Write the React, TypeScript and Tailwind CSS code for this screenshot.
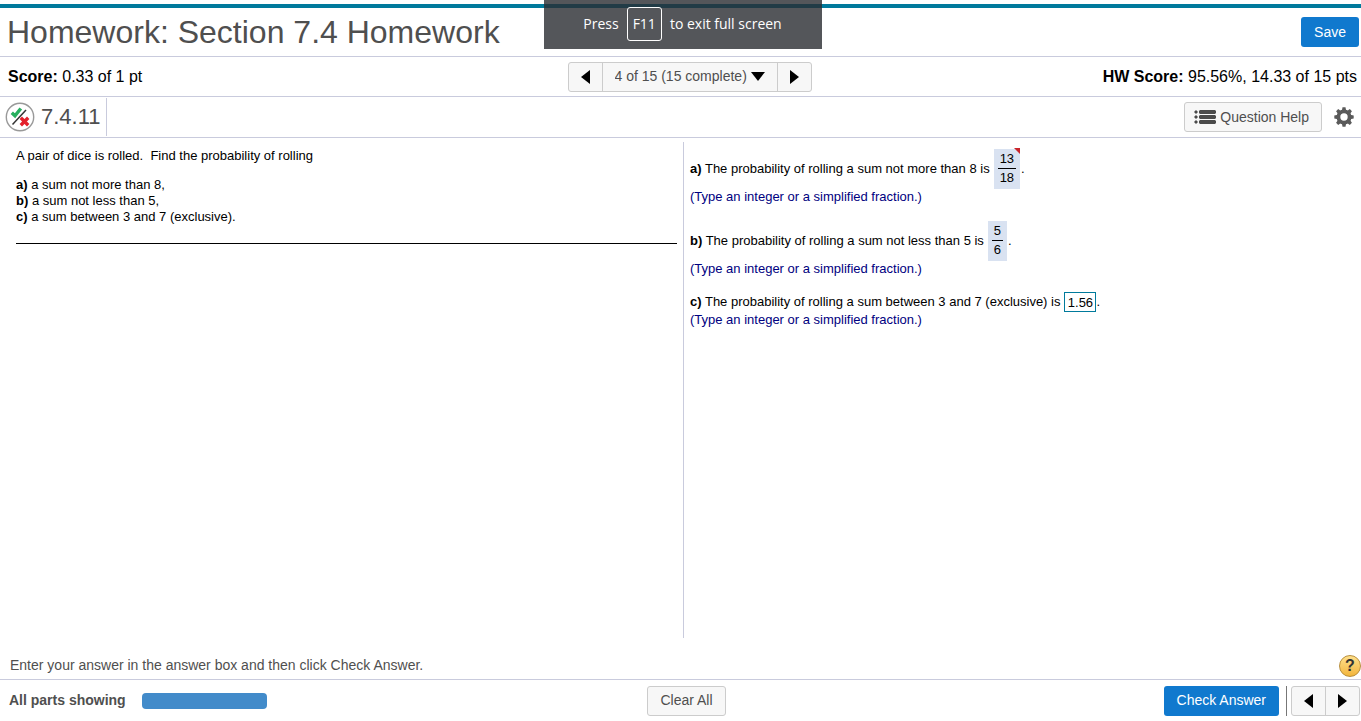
import { useState } from "react";
import type { ReactNode } from "react";

const QUESTION_COUNT = 15;

function LeftArrow() {
  return (
    <svg width="9" height="14" viewBox="0 0 9 14" aria-hidden="true">
      <path d="M9 0v14L0 7z" fill="#000" />
    </svg>
  );
}

function RightArrow() {
  return (
    <svg width="9" height="14" viewBox="0 0 9 14" aria-hidden="true">
      <path d="M0 0v14l9-7z" fill="#000" />
    </svg>
  );
}

function PartialIcon() {
  return (
    <svg width="30" height="30" viewBox="0 0 30 30" aria-hidden="true">
      <circle cx="15" cy="15" r="13.7" fill="#fff" stroke="#999" strokeWidth="1.4" />
      <path d="M7.5 22.5L21 8" stroke="#333" strokeWidth="1.5" />
      <path d="M6.8 10.8l3.2 3 5.8-7.3" fill="none" stroke="#27b05f" strokeWidth="3.4" />
      <path d="M15.8 15.8l7.4 7.4M23.2 15.8l-7.4 7.4" stroke="#e3202b" strokeWidth="3.4" />
    </svg>
  );
}

function ListIcon() {
  return (
    <svg width="22" height="14" viewBox="0 0 22 14" fill="#4a4a4a" aria-hidden="true">
      <path d="M6 0h15l1 1v2l-1 1H6L5 3V1zM6 5h15l1 1v2l-1 1H6L5 8V6zM6 10h15l1 1v2l-1 1H6l-1-1v-2z" />
      <path d="M2 0l2 2-2 2-2-2zM2 5l2 2-2 2-2-2zM2 10l2 2-2 2-2-2z" />
    </svg>
  );
}

function GearIcon() {
  const teeth = [0, 45, 90, 135, 180, 225, 270, 315];
  return (
    <svg width="20" height="20" viewBox="0 0 20 20" aria-hidden="true">
      <circle cx="10" cy="10" r="5.6" fill="none" stroke="#5a5a5a" strokeWidth="3.8" />
      {teeth.map((angle) => (
        <path key={angle} d="M7.8 4l.7-3.7h3l.7 3.7z" fill="#5a5a5a" transform={`rotate(${angle} 10 10)`} />
      ))}
    </svg>
  );
}

function Fraction({ top, bottom, wrong }: { top: string; bottom: string; wrong?: boolean }) {
  return (
    <span className="relative mr-px ml-1 inline-flex flex-col items-center bg-[#d9e2f1] px-1 pt-[3px] pb-1">
      <span className="border-b border-black px-0.5 pb-0.5 leading-[14px]">{top}</span>
      <span className="pt-0.5 leading-[14px]">{bottom}</span>
      {wrong && (
        <svg className="absolute -top-px right-0" width="6" height="6" viewBox="0 0 6 6" aria-hidden="true">
          <path d="M0 0h6v6z" fill="#c9252b" />
        </svg>
      )}
    </span>
  );
}

function Hint({ children }: { children: ReactNode }) {
  return <p className="leading-4 text-[#000080]">{children}</p>;
}

export default function App() {
  const [question, setQuestion] = useState(4);
  const [answer, setAnswer] = useState("1.56");

  return (
    <div className="relative flex min-h-screen flex-col bg-white pt-1 font-['Liberation_Sans',Arial,sans-serif] text-black">
      {/* Title bar */}
      <header className="flex h-[53px] items-center justify-between border-t-4 border-b border-t-[#007a9c] border-b-[#c9cbdd] pr-0.5 pl-[7px]">
        <h1 className="text-[32px] leading-10 text-[#4f4f4f]">Homework: Section 7.4 Homework</h1>
        <button className="h-[30px] rounded-[3px] bg-[#1079ce] px-[13px] text-[14px] text-white">Save</button>
      </header>

      {/* Scores and question navigation */}
      <div className="grid h-10 grid-cols-[1fr_auto_1fr] items-center border-b border-[#c9cbdd] pr-1 pl-2 text-base">
        <p>
          <b>Score:</b> 0.33 of 1 pt
        </p>
        <nav className="ml-3.5 flex h-[30px] rounded-[3px] border border-[#ccc] bg-[#f7f7f7] text-[14px] text-[#4f4f4f]">
          <button
            className="flex w-[34px] items-center justify-center border-r border-[#ccc]"
            aria-label="Previous question"
            onClick={() => setQuestion(Math.max(1, question - 1))}
          >
            <LeftArrow />
          </button>
          <div className="relative flex w-[174px] items-center">
            <select
              className="h-full w-full appearance-none pl-3"
              aria-label="Question"
              value={question}
              onChange={(e) => setQuestion(Number(e.target.value))}
            >
              {Array.from({ length: QUESTION_COUNT }, (_, i) => (
                <option key={i} value={i + 1}>
                  {i + 1} of 15 (15 complete)
                </option>
              ))}
            </select>
            <svg className="pointer-events-none absolute right-3" width="14" height="9" viewBox="0 0 14 9" aria-hidden="true">
              <path d="M0 0h14L7 9z" fill="#000" />
            </svg>
          </div>
          <button
            className="flex w-[34px] items-center justify-center border-l border-[#ccc]"
            aria-label="Next question"
            onClick={() => setQuestion(Math.min(QUESTION_COUNT, question + 1))}
          >
            <RightArrow />
          </button>
        </nav>
        <p className="text-right">
          <b>HW Score:</b> 95.56%, 14.33 of 15 pts
        </p>
      </div>

      {/* Exercise toolbar */}
      <div className="flex h-[41px] items-center justify-between border-b border-[#c9cbdd] pr-[7px] pl-[5px]">
        <div className="flex h-[38px] items-center gap-1.5 border-r border-[#c9cbdd] pr-[5px]">
          <PartialIcon />
          <h2 className="text-[22px] leading-7 text-[#4f4f4f]">7.4.11</h2>
        </div>
        <div className="flex items-center gap-3">
          <button className="flex h-[30px] items-center gap-1 rounded-[3px] border border-[#ccc] bg-[#f7f7f7] pr-3 pl-[9px] text-[14px] text-[#4f4f4f]">
            <ListIcon />
            Question Help
          </button>
          <button aria-label="Settings">
            <GearIcon />
          </button>
        </div>
      </div>

      {/* Question and answer panes */}
      <main className="grid flex-1 grid-cols-2 pt-1 pl-[5px] text-[13px] leading-4">
        <section className="pt-1.5 pr-1.5 pl-[11px]">
          <p>A pair of dice is rolled.&nbsp; Find the probability of rolling</p>
          <ul className="mt-[13px]">
            <li>
              <b>a)</b> a sum not more than 8,
            </li>
            <li>
              <b>b)</b> a sum not less than 5,
            </li>
            <li>
              <b>c)</b> a sum between 3 and 7 (exclusive).
            </li>
          </ul>
          <hr className="mt-[18px] border-black" />
        </section>

        <section className="border-l border-[#c9cbdd] pt-[7px] pl-1.5">
          <div className="flex items-center">
            <p>
              <b>a)</b> The probability of rolling a sum not more than 8 is
            </p>
            <Fraction top="13" bottom="18" wrong />.
          </div>
          <Hint>(Type an integer or a simplified fraction.)</Hint>
          <div className="mt-4 flex items-center">
            <p>
              <b>b)</b> The probability of rolling a sum not less than 5 is
            </p>
            <Fraction top="5" bottom="6" />.
          </div>
          <Hint>(Type an integer or a simplified fraction.)</Hint>
          <div className="mt-[15px] flex items-center">
            <label htmlFor="part-c">
              <b>c)</b> The probability of rolling a sum between 3 and 7 (exclusive) is
            </label>
            <input
              id="part-c"
              className="ml-1 h-5 w-8 border border-[#007a9c] text-center"
              value={answer}
              onChange={(e) => setAnswer(e.target.value)}
            />
            .
          </div>
          <Hint>(Type an integer or a simplified fraction.)</Hint>
        </section>
      </main>

      {/* Instruction line */}
      <div className="flex h-[41px] items-center justify-between pt-3.5 pl-2.5 text-[14px] text-[#4f4f4f]">
        <p>Enter your answer in the answer box and then click Check Answer.</p>
        <button
          className="h-[22px] w-[22px] rounded-full border border-[#b98f3c] bg-linear-to-b from-[#ffe08a] to-[#f2b53a] text-base leading-5 font-bold text-[#333]"
          aria-label="Help"
        >
          ?
        </button>
      </div>

      <footer className="grid h-[42px] grid-cols-[1fr_auto_1fr] items-center border-t border-[#c9cbdd] pr-px pl-[9px] text-[14px] text-[#4f4f4f]">
        <div className="flex items-center gap-4">
          <b>All parts showing</b>
          <div className="h-4 w-[125px] rounded-sm bg-[#428bca]" />
        </div>
        <button className="ml-1 h-[30px] rounded-[3px] border border-[#ccc] bg-[#f7f7f7] px-3" onClick={() => setAnswer("")}>
          Clear All
        </button>
        <div className="flex items-center justify-end">
          <button className="h-[30px] rounded-[3px] bg-[#1079ce] px-[13px] text-white">Check Answer</button>
          <div className="mr-1 ml-[7px] h-[30px] border-l border-[#777]" />
          <div className="flex h-[30px] rounded-[3px] border border-[#ccc] bg-[#f7f7f7]">
            <button className="flex w-[34px] items-center justify-center border-r border-[#ccc]" aria-label="Previous part">
              <LeftArrow />
            </button>
            <button className="flex w-[33px] items-center justify-center" aria-label="Next part">
              <RightArrow />
            </button>
          </div>
        </div>
      </footer>

      {/* Full screen notice */}
      <div className="absolute top-0 left-1/2 ml-0.5 flex h-[49px] w-[278px] -translate-x-1/2 items-center justify-center gap-2 bg-[#292c31]/80 pb-0.5 font-['Open_Sans','Noto_Sans',sans-serif] text-[14px] text-white">
        <span>Press</span>
        <kbd className="flex h-[34px] items-center rounded-[3px] border border-white px-[5px] font-['Open_Sans','Noto_Sans',sans-serif]">
          F11
        </kbd>
        <span>to exit full screen</span>
      </div>
    </div>
  );
}
